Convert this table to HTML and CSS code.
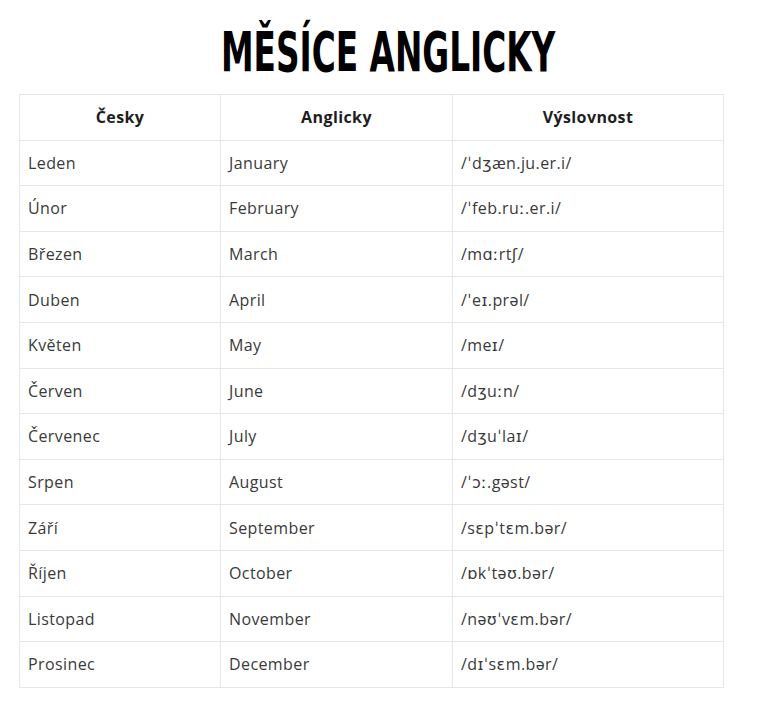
FILE: index.html
```html
<!DOCTYPE html>
<html lang="cs">
<head>
<meta charset="utf-8">
<link rel="stylesheet" href="styles.css">
</head>
<body>
<h1 class="title"><span class="title-text">MĚSÍCE ANGLICKY</span></h1>
<table class="months">
<thead>
<tr><th class="c1">Česky</th><th class="c2">Anglicky</th><th class="c3">Výslovnost</th></tr>
</thead>
<tbody>
<tr><td>Leden</td><td>January</td><td>/ˈdʒæn.ju.er.i/</td></tr>
<tr><td>Únor</td><td>February</td><td>/ˈfeb.ruː.er.i/</td></tr>
<tr><td>Březen</td><td>March</td><td>/mɑːrtʃ/</td></tr>
<tr><td>Duben</td><td>April</td><td>/ˈeɪ.prəl/</td></tr>
<tr><td>Květen</td><td>May</td><td>/meɪ/</td></tr>
<tr><td>Červen</td><td>June</td><td>/dʒuːn/</td></tr>
<tr><td>Červenec</td><td>July</td><td>/dʒuˈlaɪ/</td></tr>
<tr><td>Srpen</td><td>August</td><td>/ˈɔː.gəst/</td></tr>
<tr><td>Září</td><td>September</td><td>/sɛpˈtɛm.bər/</td></tr>
<tr><td>Říjen</td><td>October</td><td>/ɒkˈtəʊ.bər/</td></tr>
<tr><td>Listopad</td><td>November</td><td>/nəʊˈvɛm.bər/</td></tr>
<tr><td>Prosinec</td><td>December</td><td>/dɪˈsɛm.bər/</td></tr>
</tbody>
</table>
</body>
</html>
```
FILE: styles.css
```css
html, body { margin: 0; padding: 0; background: #fff; }
body { font-family: "Open Sans", "DejaVu Sans", sans-serif; }
.title {
  margin: 0;
  padding-top: 24px;
  height: 94px;
  box-sizing: border-box;
  text-align: center;
  font-family: "DejaVu Sans Condensed", "DejaVu Sans", sans-serif;
  font-weight: 700;
  font-size: 56px;
  line-height: 56px;
  color: #000;
  padding-left: 16px;
}
.title-text { display: inline-block; transform: scaleX(0.65); }
.months {
  margin: 0 0 0 19px;
  width: 704px;
  border-collapse: collapse;
  table-layout: fixed;
  font-size: 16px;
  color: #3a3a3a;
}
.months th, .months td {
  border: 1px solid #e6e6e6;
  height: 45.6px;
  box-sizing: border-box;
  padding: 0 8px;
  text-align: left;
  font-weight: 400;
  letter-spacing: 0.4px;
}
.months th { text-align: center; font-weight: 700; color: #1e1e1e; }
.c1 { width: 201px; }
.c2 { width: 232px; }
.c3 { width: 271px; }
```
